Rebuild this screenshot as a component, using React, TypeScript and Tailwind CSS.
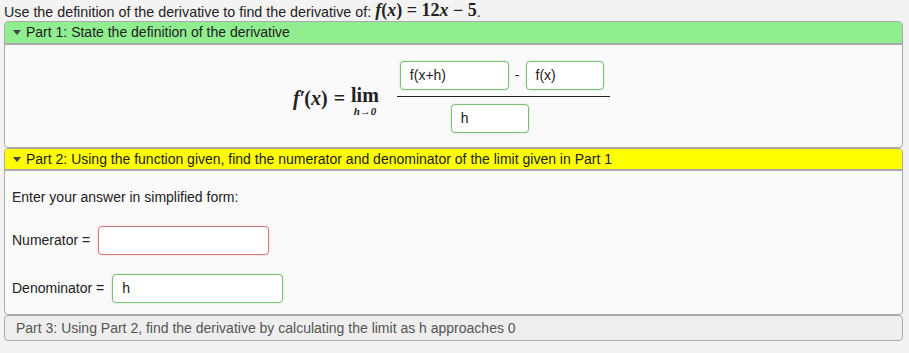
import React from 'react';

const sans = { fontFamily: '"Liberation Sans", Arial, sans-serif' };

const Caret = () => (
  <svg width="8" height="5" viewBox="0 0 8 5" className="mr-[5px] shrink-0">
    <path d="M0 0 L8 0 L4 5 Z" fill="#444" />
  </svg>
);

const Box = ({ value = '', width, bad }: { value?: string; width: string; bad?: boolean }) => (
  <div
    className={`${width} h-[29px] rounded-[4px] bg-white border flex items-center pl-[9px] text-[14px] text-[#222] ${
      bad
        ? 'border-[#d9777a] shadow-[0_0_2px_rgba(220,80,80,0.35)]'
        : 'border-[#7cbf78] shadow-[0_0_2px_rgba(80,170,80,0.35)]'
    }`}
  >
    {value}
  </div>
);

const App: React.FC = () => {
  return (
    <div className="w-[909px] h-[353px] bg-[#f3f3f3] text-[#222] overflow-hidden" style={sans}>
      {/* Question */}
      <div className="h-[21px] pl-[4px] flex items-end text-[14.3px] leading-none pb-[2px]">
        <span>Use the definition of the derivative to find the derivative of:&nbsp;</span>
        <span className="font-['Liberation_Serif',serif] text-[18px] font-bold leading-none">
          <i>f</i>(<i>x</i>) = 12<i>x</i> − 5
        </span>
        <span>.</span>
      </div>

      <div className="pl-[4px] pr-[6px]">
        {/* Part 1 */}
        <div className="border border-[#aaa] rounded-[4px] bg-[#fafafa] overflow-hidden">
          <div className="h-[23px] bg-[#90ee90] border-b-2 border-[#aaa] flex items-center pl-[8px] text-[14px]">
            <Caret />
            Part 1: State the definition of the derivative
          </div>
          <div className="h-[102px] flex items-center pl-[288px] pt-[4px]">
            <div className="flex items-center font-['Liberation_Serif',serif] font-bold text-[20px] mr-[18px]">
              <i>f</i>
              <span className="mr-[-1px]">′</span>(<i>x</i>)<span className="mx-[6px]">=</span>
              <span className="flex flex-col items-center leading-none mt-[6px]">
                <span className="text-[20px]">lim</span>
                <span className="text-[11px] italic mt-[1px]">h→0</span>
              </span>
            </div>
            <div className="flex flex-col w-[213px]">
              <div className="flex items-center pl-[3px] pb-[6px] mt-[-3px]">
                <Box value="f(x+h)" width="w-[109px]" />
                <span className="mx-[6px] text-[14px]">-</span>
                <Box value="f(x)" width="w-[78px]" />
              </div>
              <div className="h-px w-[213px] bg-[#222]" />
              <div className="pt-[7px] pl-[54px]">
                <Box value="h" width="w-[78px]" />
              </div>
            </div>
          </div>
        </div>

        {/* Part 2 */}
        <div className="border border-[#aaa] rounded-[4px] bg-[#fafafa] overflow-hidden">
          <div className="h-[22px] bg-[#ffff00] border-b-2 border-[#aaa] flex items-center pl-[8px] text-[14px]">
            <Caret />
            Part 2: Using the function given, find the numerator and denominator of the limit given in Part 1
          </div>
          <div className="h-[143px] pl-[7px] pt-[16px] text-[14px]">
            <div>Enter your answer in simplified form:</div>
            <div className="flex items-center mt-[18px]">
              <span className="mr-[8px]">Numerator =</span>
              <Box width="w-[171px]" bad />
            </div>
            <div className="flex items-center mt-[19px]">
              <span className="mr-[8px]">Denominator =</span>
              <Box value="h" width="w-[171px]" />
            </div>
          </div>
        </div>

        {/* Part 3 */}
        <div className="border border-[#aaa] rounded-[4px] bg-[#eeeeee] h-[26px] flex items-center pl-[11px] text-[14px] text-[#555]">
          Part 3: Using Part 2, find the derivative by calculating the limit as h approaches 0
        </div>
      </div>
    </div>
  );
};

export default App;
